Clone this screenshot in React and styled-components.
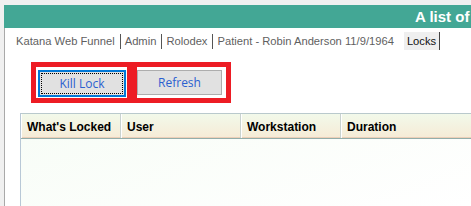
import styled, { createGlobalStyle } from 'styled-components'

const Global = createGlobalStyle`
  html, body {
    margin: 0;
    padding: 0;
    background: #f0f0f0;
  }
`

const tabs = ['Katana Web Funnel', 'Admin', 'Rolodex', 'Patient - Robin Anderson 11/9/1964']
const columns = [
  { title: "What's Locked", width: 100 },
  { title: 'User', width: 120 },
  { title: 'Workstation', width: 100 },
  { title: 'Duration', width: 140 },
]

function App() {
  return (
    <>
      <Global />
      <Page>
        <TitleBar>A list of all current locks</TitleBar>
        <Panel>
          <TabRow>
            {tabs.map((t, i) => (
              <Tab key={i}>{t}</Tab>
            ))}
            <Tab active>Locks</Tab>
          </TabRow>
          <Toolbar>
            <Highlight>
              <Button focused>
                <FocusRing>Kill Lock</FocusRing>
              </Button>
            </Highlight>
            <Highlight right>
              <Button>Refresh</Button>
            </Highlight>
          </Toolbar>
          <Grid>
            <HeaderRow>
              {columns.map(c => (
                <HeaderCell key={c.title} $w={c.width}>{c.title}</HeaderCell>
              ))}
            </HeaderRow>
            <Body />
          </Grid>
        </Panel>
      </Page>
    </>
  )
}

export default App

const Page = styled.div`
  width: 471px;
  height: 206px;
  overflow: hidden;
  box-sizing: border-box;
  padding: 5px 0 0 4px;
  display: flex;
  flex-direction: column;
  font-family: "Liberation Sans", Arial, sans-serif;
`
const TitleBar = styled.div`
  height: 23px;
  flex-shrink: 0;
  background: #43a795;
  color: #fff;
  font-weight: bold;
  font-size: 15px;
  line-height: 23px;
  padding-left: 411px;
  white-space: nowrap;
  overflow: hidden;
`
const Panel = styled.div`
  flex: 1;
  background: #fff;
  border-left: 1px solid #a9a9a9;
  display: flex;
  flex-direction: column;
  overflow: hidden;
`
const TabRow = styled.div`
  display: flex;
  align-items: center;
  height: 18px;
  margin-top: 4px;
  padding-left: 7px;
  white-space: nowrap;
`
const Tab = styled.div`
  font-size: 11.2px;
  color: ${p => (p.active ? '#111' : '#5f5f5f')};
  background: ${p => (p.active ? '#efefef' : 'transparent')};
  height: 18px;
  line-height: 18px;
  padding: 0 ${p => (p.active ? '3px' : '4px')};
  margin-left: ${p => (p.active ? '6px' : '0')};
  box-sizing: border-box;
  border-right: ${p => (p.active ? '1px solid #444' : 'none')};
  position: relative;
  &:not(:nth-last-child(-n+2))::after {
    content: '';
    position: absolute;
    right: 0;
    top: 2px;
    height: 15px;
    width: 1px;
    background: #555;
  }
  &:not(:nth-last-child(-n+2)) {
    padding-right: 6px;
  }
`
const Toolbar = styled.div`
  display: flex;
  margin: 12px 0 0 26px;
`
const Highlight = styled.div`
  border: 5px solid #ed1c24;
  padding: ${p => (p.right ? '3px 4px 3px 0' : '3px 1px 1px 2px')};
  box-sizing: border-box;
  width: ${p => (p.right ? '99px' : '101px')};
  height: 41px;
`
const Button = styled.div`
  height: ${p => (p.focused ? '27px' : '25px')};
  box-sizing: border-box;
  background: #e1e1e1;
  border: ${p => (p.focused ? '2px solid #0078d7' : '1px solid #adadad')};
  color: #2b5fd0;
  font-family: "Open Sans", "Liberation Sans", sans-serif;
  font-size: 12px;
  display: flex;
  align-items: center;
  justify-content: center;
  padding: 1px;
`
const FocusRing = styled.div`
  flex: 1;
  align-self: stretch;
  border: 1px dotted #000;
  display: flex;
  align-items: center;
  justify-content: center;
`
const Grid = styled.div`
  margin: 10px 0 0 15px;
  flex: 1;
  border-left: 1px solid #b8c8d6;
  display: flex;
  flex-direction: column;
`
const HeaderRow = styled.div`
  display: flex;
  height: 26px;
  box-sizing: border-box;
  border-top: 1px solid #b9c9cc;
  border-bottom: 1px solid #93aeaa;
  box-shadow: inset 0 -1px 0 #eccfb8;
  background: linear-gradient(#f2f9ea, #f6ebd6);
`
const HeaderCell = styled.div`
  width: ${p => p.$w}px;
  flex-shrink: 0;
  box-sizing: border-box;
  padding-left: 6px;
  border-right: 1px solid #c9d2cf;
  box-shadow: inset 1px 0 0 #fff;
  font-weight: bold;
  font-size: 12px;
  line-height: 26px;
  color: #000;
  white-space: nowrap;
`
const Body = styled.div`
  flex: 1;
  background: linear-gradient(160deg, #f8fdf7, #ffffff);
`
